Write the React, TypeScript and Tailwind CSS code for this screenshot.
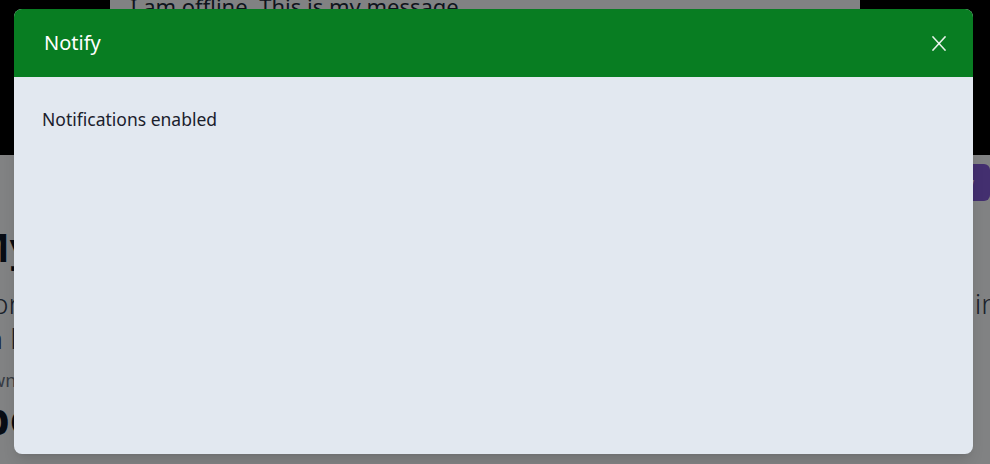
import { useState } from 'react';

function CloseIcon() {
  return (
    <svg width="14" height="15" viewBox="0 0 14 15" fill="none" stroke="currentColor" strokeWidth="1.6" strokeLinecap="square">
      <path d="M1 1L13 14" />
      <path d="M13 1L1 14" />
    </svg>
  );
}

export default function App() {
  const [open, setOpen] = useState(true);

  return (
    <div className="relative h-[464px] w-[990px] overflow-hidden bg-[#f7fafc] font-['Noto_Sans',sans-serif]">
      {/* page behind the modal */}
      <div className="flow-root h-[155px] bg-black">
        <div className="ml-[110px] h-[40px] w-[750px] bg-[#f7fafc] px-5 -mt-[9px] text-[22px] leading-[30px] text-gray-800">
          I am offline. This is my message
        </div>
      </div>
      <div className="mt-[9px] flex justify-end">
        <button className="ml-[955px] flex h-[37px] w-[90px] items-center rounded-md bg-[#805ad5] px-4 text-[16px] text-white">
          Follow
        </button>
      </div>
      <h1 className="-ml-[28px] mt-[22px] text-[40px] font-bold leading-[48px] text-gray-900">My</h1>
      <div className="mt-[15px] text-[28px] font-light leading-[35px] text-gray-700">
        <div className="flex justify-between">
          <span className="-ml-[8px]">or</span>
          <span className="-mr-[8px]">in</span>
        </div>
        <div className="flex">
          <span className="-ml-[12px]">a l</span>
        </div>
      </div>
      <div className="-ml-[9px] mt-[12px] text-[18px] leading-[24px] text-gray-500">wn</div>
      <div className="-ml-[18px] mt-[2px] text-[44px] font-bold leading-[48px] text-gray-900">bo</div>

      {open && (
        <div className="absolute inset-0 bg-[rgba(0,0,0,0.48)]">
          <div className="ml-[14px] mt-[9px] flex h-[445px] w-[959px] flex-col overflow-hidden rounded-lg bg-[#e2e8f0] shadow-lg">
            <div className="flex h-[68px] shrink-0 items-center justify-between bg-[#087d22] pl-[30px] pr-[18px] text-white">
              <h2 className="text-[20px] leading-[28px]">Notify</h2>
              <button onClick={() => setOpen(false)} className="flex h-8 w-8 items-center justify-center text-white/90">
                <CloseIcon />
              </button>
            </div>
            <div className="px-[28px] pt-[30px] text-[17.5px] leading-[24px] text-[#1a202c]">
              Notifications enabled
            </div>
          </div>
        </div>
      )}
    </div>
  );
}
